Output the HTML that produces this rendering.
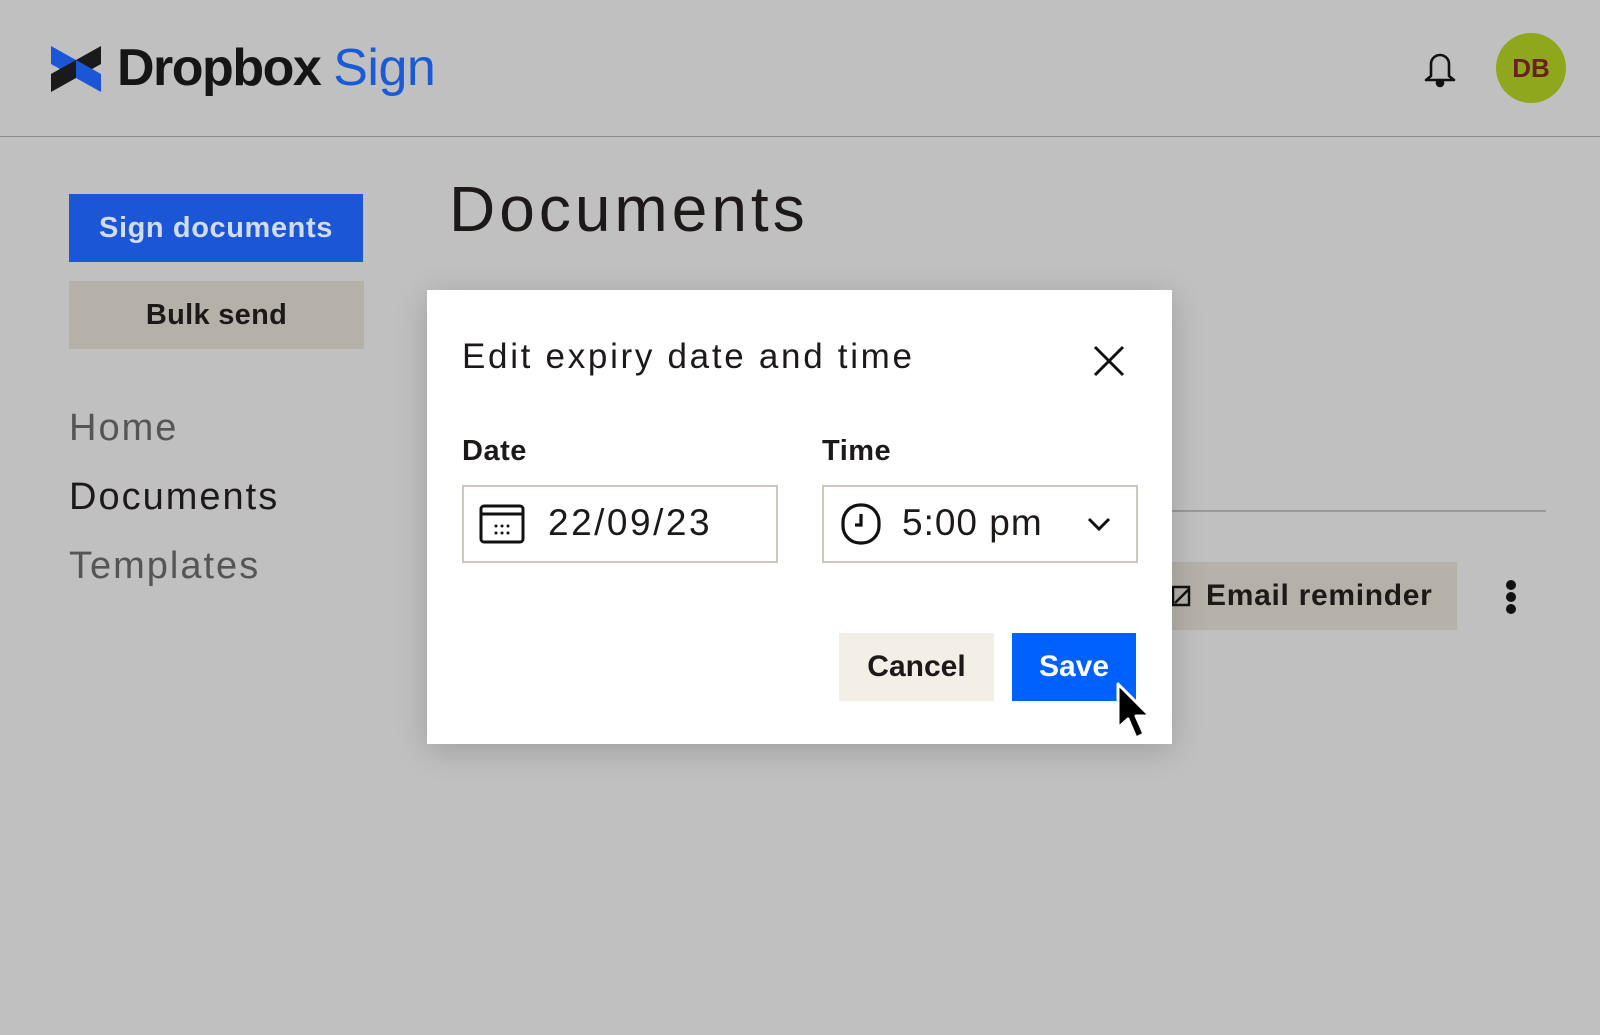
<!DOCTYPE html>
<html><head><meta charset="utf-8"><style>
*{margin:0;padding:0;box-sizing:border-box}
body{width:1600px;height:1035px;background:#c0c0c0;font-family:"Liberation Sans",sans-serif;position:relative;overflow:hidden;color:#1e1919}
.a{position:absolute}
.hdr{left:0;top:0;width:1600px;height:137px;border-bottom:1.5px solid #8a8a8a}
.btn{display:flex;align-items:center;justify-content:center;font-weight:bold}
.nav{font-size:38px;left:69px;letter-spacing:2px}
</style></head><body>
<div class="a hdr"></div>
<svg class="a" style="left:51px;top:46px" width="50" height="46" viewBox="0 0 50 46">
<polygon points="0,0 25,14 25,32 0,18" fill="#1a56d6"/>
<polygon points="50,0 25,14 25,32 50,18" fill="#1a1a1a"/>
<polygon points="0,28 25,14 25,32 0,46" fill="#1a1a1a"/>
<polygon points="50,28 25,14 25,32 50,46" fill="#1a56d6"/>
</svg>
<div class="a" style="left:117px;top:36px;font-size:52px;font-weight:bold;letter-spacing:-1.5px;color:#151515;line-height:64px">Dropbox <span style="color:#1a5ad7;font-weight:normal;letter-spacing:-0.5px">Sign</span></div>
<svg class="a" style="left:1419px;top:48px" width="42" height="42" viewBox="0 0 42 42" fill="none" stroke="#111" stroke-width="2.6" stroke-linejoin="round">
<path d="M12 28 V16 a9 9 0 0 1 18 0 V28 l5 4 H7 z"/><circle cx="21" cy="35" r="3" fill="#111"/>
</svg>
<div class="a" style="left:1496px;top:33px;width:70px;height:70px;border-radius:50%;background:#8ea71c;color:#6a2020;font-weight:bold;font-size:26px;display:flex;align-items:center;justify-content:center">DB</div>

<div class="a btn" style="left:69px;top:194px;width:294px;height:68px;background:#1a56d6;color:#d3dcef;font-size:29px;letter-spacing:0.6px">Sign documents</div>
<div class="a btn" style="left:69px;top:281px;width:295px;height:68px;background:#b5b0a8;color:#1e1919;font-size:29px;letter-spacing:0.3px">Bulk send</div>
<div class="a nav" style="top:407px;color:#555">Home</div>
<div class="a nav" style="top:476px;color:#1e1919">Documents</div>
<div class="a nav" style="top:545px;color:#555">Templates</div>
<div class="a" style="left:449px;top:172px;font-size:64px;color:#1e1919;letter-spacing:4px">Documents</div>
<div class="a" style="left:1172px;top:510px;width:374px;height:1.5px;background:#999"></div>
<div class="a btn" style="left:1140px;top:562px;width:317px;height:68px;background:#b5b0a8;font-size:30px;justify-content:flex-start;padding-left:66px;letter-spacing:0.7px">Email reminder</div>
<svg class="a" style="left:1170px;top:584px" width="22" height="24" viewBox="0 0 22 24" fill="none" stroke="#111" stroke-width="2.5"><rect x="3" y="3" width="16" height="18"/><path d="M5 19 L19 5"/></svg>
<div class="a" style="left:1506px;top:580px;width:10px;height:10px;border-radius:50%;background:#111;box-shadow:0 12px 0 #111,0 24px 0 #111"></div>

<div class="a" style="left:427px;top:290px;width:745px;height:454px;background:#fff;box-shadow:0 6px 30px rgba(0,0,0,.18)"></div>
<div class="a" style="left:462px;top:337px;font-size:35px;color:#1e1919;letter-spacing:2.7px">Edit expiry date and time</div>
<svg class="a" style="left:1092px;top:344px" width="34" height="34" viewBox="0 0 34 34" stroke="#111" stroke-width="3"><path d="M3 3 L31 31 M31 3 L3 31"/></svg>
<div class="a" style="left:462px;top:435px;font-size:29px;font-weight:bold;letter-spacing:0.5px">Date</div>
<div class="a" style="left:822px;top:435px;font-size:29px;font-weight:bold;letter-spacing:0.5px">Time</div>
<div class="a" style="left:462px;top:485px;width:316px;height:78px;border:2.5px solid #ccc8c0"></div>
<div class="a" style="left:822px;top:485px;width:316px;height:78px;border:2.5px solid #ccc8c0"></div>
<svg class="a" style="left:479px;top:504px" width="46" height="40" viewBox="0 0 46 40" fill="none" stroke="#111" stroke-width="3"><rect x="2" y="2" width="42" height="36" rx="3"/><path d="M2 10 H44"/><g fill="#111" stroke="none"><circle cx="17" cy="22" r="1.5"/><circle cx="23" cy="22" r="1.5"/><circle cx="29" cy="22" r="1.5"/><circle cx="17" cy="29" r="1.5"/><circle cx="23" cy="29" r="1.5"/><circle cx="29" cy="29" r="1.5"/></g></svg>
<div class="a" style="left:548px;top:502px;font-size:37px;letter-spacing:2.5px">22/09/23</div>
<svg class="a" style="left:841px;top:503px" width="40" height="42" viewBox="0 0 40 42" fill="none" stroke="#111" stroke-width="3.2"><rect x="2" y="2" width="36" height="38" rx="17"/><path d="M20 11 V22 H14"/></svg>
<div class="a" style="left:902px;top:502px;font-size:37px;letter-spacing:1px">5:00 pm</div>
<svg class="a" style="left:1086px;top:515px" width="26" height="18" viewBox="0 0 26 18" fill="none" stroke="#111" stroke-width="3"><path d="M3 4 L13 14 L23 4"/></svg>
<div class="a btn" style="left:839px;top:633px;width:155px;height:68px;background:#f4efe6;font-size:30px">Cancel</div>
<div class="a btn" style="left:1012px;top:633px;width:124px;height:68px;background:#0061fe;color:#fff;font-size:30px">Save</div>
<svg class="a" style="left:1114px;top:682px" width="44" height="62" viewBox="0 0 44 62"><path d="M4 2 L4 46 L14 37 L22 56 L30 52 L22 34 L36 34 Z" fill="#000" stroke="#fff" stroke-width="3" stroke-linejoin="round"/></svg>
</body></html>
